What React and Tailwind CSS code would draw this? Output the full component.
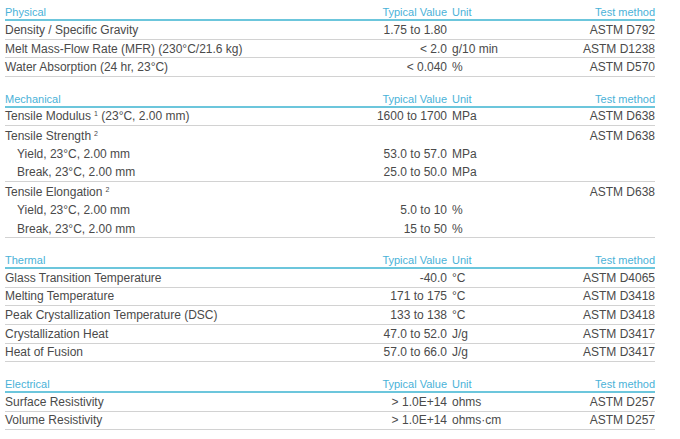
import React from "react";

const sections = [
  {
    title: "Physical",
    rows: [
      { label: "Density / Specific Gravity", value: "1.75 to 1.80", unit: "", method: "ASTM D792" },
      { label: "Melt Mass-Flow Rate (MFR) (230°C/21.6 kg)", value: "< 2.0", unit: "g/10 min", method: "ASTM D1238" },
      { label: "Water Absorption (24 hr, 23°C)", value: "< 0.040", unit: "%", method: "ASTM D570" },
    ],
  },
  {
    title: "Mechanical",
    rows: [
      { label: "Tensile Modulus", sup: "1", extra: " (23°C, 2.00 mm)", value: "1600 to 1700", unit: "MPa", method: "ASTM D638" },
      { label: "Tensile Strength", sup: "2", value: "", unit: "", method: "ASTM D638", noLine: true },
      { label: "Yield, 23°C, 2.00 mm", indent: true, value: "53.0 to 57.0", unit: "MPa", method: "", noLine: true },
      { label: "Break, 23°C, 2.00 mm", indent: true, value: "25.0 to 50.0", unit: "MPa", method: "" },
      { label: "Tensile Elongation", sup: "2", value: "", unit: "", method: "ASTM D638", noLine: true },
      { label: "Yield, 23°C, 2.00 mm", indent: true, value: "5.0 to 10", unit: "%", method: "", noLine: true },
      { label: "Break, 23°C, 2.00 mm", indent: true, value: "15 to 50", unit: "%", method: "" },
    ],
  },
  {
    title: "Thermal",
    rows: [
      { label: "Glass Transition Temperature", value: "-40.0", unit: "°C", method: "ASTM D4065" },
      { label: "Melting Temperature", value: "171 to 175", unit: "°C", method: "ASTM D3418" },
      { label: "Peak Crystallization Temperature (DSC)", value: "133 to 138", unit: "°C", method: "ASTM D3418" },
      { label: "Crystallization Heat", value: "47.0 to 52.0", unit: "J/g", method: "ASTM D3417" },
      { label: "Heat of Fusion", value: "57.0 to 66.0", unit: "J/g", method: "ASTM D3417" },
    ],
  },
  {
    title: "Electrical",
    rows: [
      { label: "Surface Resistivity", value: "> 1.0E+14", unit: "ohms", method: "ASTM D257" },
      { label: "Volume Resistivity", value: "> 1.0E+14", unit: "ohms·cm", method: "ASTM D257" },
    ],
  },
];

const Section = ({ section, first }) => (
  <div className={first ? "" : "mt-[9.5px]"}>
    {/* header row */}
    <div className="flex items-end h-[21px] border-b-2 border-[#6cc6dc] text-[11px] leading-[14px] text-[#4ab2d8]">
      <div className="w-[320px]">{section.title}</div>
      <div className="w-[122px] text-right">Typical Value</div>
      <div className="w-[100px] pl-[5px]">Unit</div>
      <div className="flex-1 text-right">Test method</div>
    </div>
    {section.rows.map((row, i) => (
      <div
        key={i}
        className={
          "flex items-center h-[18.7px] text-[12px] leading-[14px] text-[#4a4a4a] " +
          (row.noLine ? "" : "border-b border-[#d2d2d2]")
        }
      >
        <div className={"w-[320px] whitespace-nowrap " + (row.indent ? "pl-[12px]" : "")}>
          {row.label}
          {row.sup && <sup className="text-[7px] ml-[3px] -top-[4px]">{row.sup}</sup>}
          {row.extra}
        </div>
        <div className="w-[122px] text-right whitespace-nowrap">{row.value}</div>
        <div className="w-[100px] pl-[5px] whitespace-nowrap">{row.unit}</div>
        <div className="flex-1 text-right whitespace-nowrap">{row.method}</div>
      </div>
    ))}
  </div>
);

export default function App() {
  return (
    <div className="w-[680px] h-[439px] bg-white overflow-hidden" style={{ fontFamily: '"Liberation Sans", Arial, sans-serif' }}>
      <div className="ml-[5px] w-[652px] pr-[2px]">
        {sections.map((s, i) => (
          <Section key={s.title} section={s} first={i === 0} />
        ))}
      </div>
    </div>
  );
}
